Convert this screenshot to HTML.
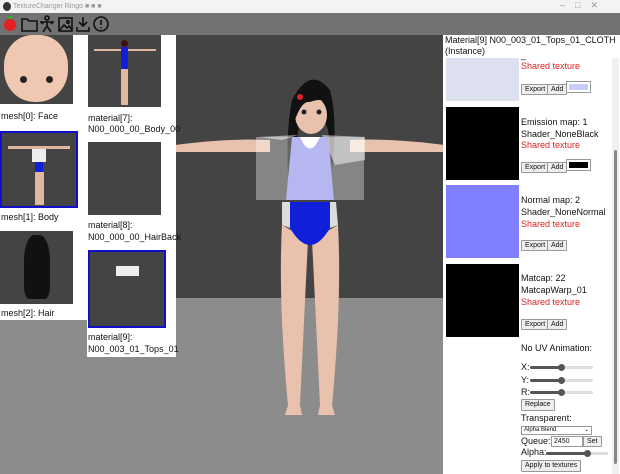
<!DOCTYPE html>
<html><head><meta charset="utf-8"><style>
*{margin:0;padding:0;box-sizing:border-box}
body{width:620px;height:474px;overflow:hidden;position:relative;font-family:"Liberation Sans",sans-serif;font-size:9px;color:#111;background:#444}
.a{position:absolute}
.t{position:absolute;white-space:nowrap;font-size:9px;line-height:11px}
.red{color:#e02020}
.btn{position:absolute;height:11px;border:1px solid #999;background:#eee;font-size:7px;line-height:9px;padding:0 3px;border-radius:1px}
.sl{position:absolute;height:3px;background:#ddd;border-radius:2px}
.sl i{position:absolute;left:0;top:0;height:3px;background:#555;border-radius:2px}
.sl b{position:absolute;top:-2px;width:7px;height:7px;border-radius:50%;background:#555}
</style></head><body>
<div class="a" style="left:0;top:0;width:620px;height:13px;background:#f3f3f3"></div>
<div class="a" style="left:3px;top:2px;width:8px;height:9px;border-radius:50%;background:#333"></div>
<div class="t" style="left:13px;top:1px;font-size:7px;color:#999">TextureChanger Ringo ■ ■ ■</div>
<div class="t" style="left:560px;top:0;font-size:9px;color:#999">–&nbsp;&nbsp;&nbsp;&nbsp;□&nbsp;&nbsp;&nbsp;&nbsp;✕</div>
<div class="a" style="left:0;top:13px;width:620px;height:22px;background:#727272"></div>
<div class="a" style="left:4px;top:19px;width:12px;height:12px;border-radius:50%;background:#e52020"></div>
<div class="a" style="left:8px;top:16px;width:4px;height:3px;background:#3a3"></div>
<svg class="a" style="left:20px;top:14px" width="100" height="20" viewBox="0 0 100 20" fill="none" stroke="#111" stroke-width="1.6">
<path d="M2 5h5l2 2h8v10H2z"/>
<circle cx="27" cy="4" r="2"/><path d="M20 8h14M27 7v5M23 18l4-6 4 6M21 8l2 2M33 8l-2 2"/>
<rect x="39" y="4" width="13" height="13"/><path d="M40 16l4-5 3 3 2-2 3 4"/><circle cx="48" cy="8" r="1.3"/>
<path d="M63 3v9M59 8l4 4 4-4M57 13v4h12v-4"/>
<circle cx="81" cy="10" r="7"/><path d="M81 6v5M81 13v1.5"/>
</svg>
<div class="a" style="left:0;top:35px;width:620px;height:264px;background:#444"></div>
<div class="a" style="left:0;top:298px;width:620px;height:176px;background:#8c8c8c"></div>
<svg class="a" style="left:170px;top:60px" width="280" height="360" viewBox="0 0 280 360">
<path d="M122 40 Q140 5 160 30 Q168 60 162 110 L158 70 Q150 45 140 40 Q128 50 124 110 L118 115 Q116 70 122 40z" fill="#111"/>
<g fill="#e9c2ad">
<path d="M5 85 Q60 78 100 80 L100 92 Q60 92 5 92z"/>
<path d="M275 85 Q220 78 180 80 L180 92 Q220 92 275 92z"/>
<path d="M112 165 Q108 240 118 345 L115 355 L132 355 L130 345 Q134 260 138 180z"/>
<path d="M168 165 Q172 240 162 345 L165 355 L148 355 L150 345 Q146 260 142 180z"/>
<ellipse cx="141" cy="55" rx="16" ry="19"/>
</g>
<path d="M125 45 Q140 28 158 42 Q150 38 140 42 Q132 40 125 60z" fill="#111"/>
<circle cx="134" cy="52" r="2.5" fill="#222"/><circle cx="149" cy="52" r="2.5" fill="#222"/>
<circle cx="130" cy="37" r="3" fill="#d22"/>
<path d="M88 77 L128 75 L112 80z M152 75 L195 77 L195 100 L165 105z" fill="#fff" opacity=".5"/>
<path d="M122 77 L158 77 L164 140 L116 140z" fill="#8f8fe8"/>
<rect x="86" y="77" width="108" height="63" fill="#fff" opacity=".35"/>
<path d="M114 142 L166 142 L160 168 Q150 185 140 185 Q130 185 120 168z" fill="#1020d8"/>
<path d="M112 142 L120 142 L120 168 L112 165z M166 142 L160 142 L160 168 L168 165z" fill="#ddd"/>
<path d="M130 77 Q140 100 150 77" fill="#fff"/>
</svg>
<div class="a" style="left:0;top:35px;width:87px;height:285px;background:#fff"></div>
<div class="a" style="left:87px;top:35px;width:89px;height:322px;background:#fff"></div>
<div class="a" style="left:0;top:35px;width:73px;height:69px;background:#444"></div>
<div class="a" style="left:4px;top:35px;width:64px;height:67px;border-radius:45% 45% 48% 48%;background:#f0c7b0"></div>
<div class="a" style="left:20px;top:76px;width:7px;height:7px;border-radius:50%;background:#222"></div>
<div class="a" style="left:46px;top:76px;width:7px;height:7px;border-radius:50%;background:#222"></div>
<div class="t" style="left:1px;top:111px">mesh[0]: Face</div>
<div class="a" style="left:0;top:131px;width:78px;height:77px;background:#444;border:2px solid #1010c8"></div>
<div class="a" style="left:32px;top:148px;width:14px;height:14px;background:#eee"></div>
<div class="a" style="left:8px;top:146px;width:62px;height:3px;background:#e0b8a0"></div>
<div class="a" style="left:35px;top:162px;width:8px;height:10px;background:#1020d8"></div>
<div class="a" style="left:35px;top:172px;width:9px;height:33px;background:#e0b8a0"></div>
<div class="t" style="left:1px;top:212px">mesh[1]: Body</div>
<div class="a" style="left:0;top:231px;width:73px;height:73px;background:#444"></div>
<div class="a" style="left:24px;top:235px;width:26px;height:64px;background:#111;border-radius:40% 40% 20% 20%"></div>
<div class="t" style="left:1px;top:308px">mesh[2]: Hair</div>
<div class="a" style="left:88px;top:35px;width:73px;height:72px;background:#444"></div>
<div class="a" style="left:94px;top:49px;width:62px;height:2px;background:#e0b8a0"></div>
<div class="a" style="left:121px;top:40px;width:7px;height:7px;border-radius:50%;background:#401010"></div>
<div class="a" style="left:121px;top:47px;width:7px;height:22px;background:#1020d8"></div>
<div class="a" style="left:121px;top:69px;width:7px;height:36px;background:#e0b8a0"></div>
<div class="t" style="left:88px;top:113px">material[7]:</div>
<div class="t" style="left:88px;top:124px">N00_000_00_Body_00</div>
<div class="a" style="left:88px;top:142px;width:73px;height:73px;background:#444"></div>
<div class="t" style="left:88px;top:220px">material[8]:</div>
<div class="t" style="left:88px;top:232px">N00_000_00_HairBack</div>
<div class="a" style="left:88px;top:250px;width:78px;height:78px;background:#444;border:2px solid #1010c8"></div>
<div class="a" style="left:116px;top:266px;width:23px;height:10px;background:#eee"></div>
<div class="t" style="left:88px;top:332px">material[9]:</div>
<div class="t" style="left:88px;top:344px">N00_003_01_Tops_01</div>
<div class="a" style="left:443px;top:35px;width:177px;height:439px;background:#fff"></div>
<div class="t" style="left:445px;top:35px">Material[9] N00_003_01_Tops_01_CLOTH</div>
<div class="t" style="left:445px;top:46px">(Instance)</div>
<div class="a" style="left:612px;top:58px;width:7px;height:416px;background:#f0f0f0"></div>
<div class="a" style="left:614px;top:150px;width:3px;height:314px;background:#888;border-radius:2px"></div>
<div class="a" style="left:446px;top:58px;width:73px;height:43px;background:#dde0ee"></div>
<div class="t" style="left:521px;top:50px">_</div>
<div class="t red" style="left:521px;top:61px">Shared texture</div>
<div class="btn" style="left:521px;top:84px">Export</div><div class="btn" style="left:547px;top:84px">Add</div>
<div class="a" style="left:566px;top:81px;width:25px;height:12px;border:1px solid #999;background:#fff;padding:2px"><div style="width:100%;height:100%;background:#c8ccf8"></div></div>
<div class="a" style="left:446px;top:107px;width:73px;height:73px;background:#000"></div>
<div class="t" style="left:521px;top:117px">Emission map: 1</div>
<div class="t" style="left:521px;top:129px">Shader_NoneBlack</div>
<div class="t red" style="left:521px;top:140px">Shared texture</div>
<div class="btn" style="left:521px;top:162px">Export</div><div class="btn" style="left:547px;top:162px">Add</div>
<div class="a" style="left:566px;top:159px;width:25px;height:12px;border:1px solid #999;background:#fff;padding:2px"><div style="width:100%;height:100%;background:#000"></div></div>
<div class="a" style="left:446px;top:185px;width:73px;height:73px;background:#8080ff"></div>
<div class="t" style="left:521px;top:195px">Normal map: 2</div>
<div class="t" style="left:521px;top:207px">Shader_NoneNormal</div>
<div class="t red" style="left:521px;top:219px">Shared texture</div>
<div class="btn" style="left:521px;top:240px">Export</div><div class="btn" style="left:547px;top:240px">Add</div>
<div class="a" style="left:446px;top:264px;width:73px;height:73px;background:#000"></div>
<div class="t" style="left:521px;top:273px">Matcap: 22</div>
<div class="t" style="left:521px;top:285px">MatcapWarp_01</div>
<div class="t red" style="left:521px;top:297px">Shared texture</div>
<div class="btn" style="left:521px;top:319px">Export</div><div class="btn" style="left:547px;top:319px">Add</div>
<div class="t" style="left:521px;top:343px">No UV Animation:</div>
<div class="t" style="left:521px;top:362px">X:</div><div class="sl" style="left:530px;top:366px;width:63px"><i style="width:32px"></i><b style="left:28px"></b></div>
<div class="t" style="left:521px;top:375px">Y:</div><div class="sl" style="left:530px;top:379px;width:63px"><i style="width:32px"></i><b style="left:28px"></b></div>
<div class="t" style="left:521px;top:387px">R:</div><div class="sl" style="left:530px;top:391px;width:63px"><i style="width:32px"></i><b style="left:28px"></b></div>
<div class="btn" style="left:521px;top:399px;height:12px">Replace</div>
<div class="t" style="left:521px;top:413px">Transparent:</div>
<div class="a" style="left:521px;top:426px;width:71px;height:9px;border:1px solid #999;font-size:6px;line-height:7px;padding-left:2px">Alpha Blend<span style="float:right;padding-right:2px">⌄</span></div>
<div class="t" style="left:521px;top:436px">Queue:</div>
<div class="a" style="left:551px;top:436px;width:32px;height:11px;border:1px solid #999;font-size:7px;line-height:9px;padding-left:2px">2450</div>
<div class="btn" style="left:583px;top:436px">Set</div>
<div class="t" style="left:521px;top:447px">Alpha:</div><div class="sl" style="left:546px;top:452px;width:62px"><i style="width:42px"></i><b style="left:38px"></b></div>
<div class="btn" style="left:521px;top:460px;height:12px">Apply to textures</div>
</body></html>
